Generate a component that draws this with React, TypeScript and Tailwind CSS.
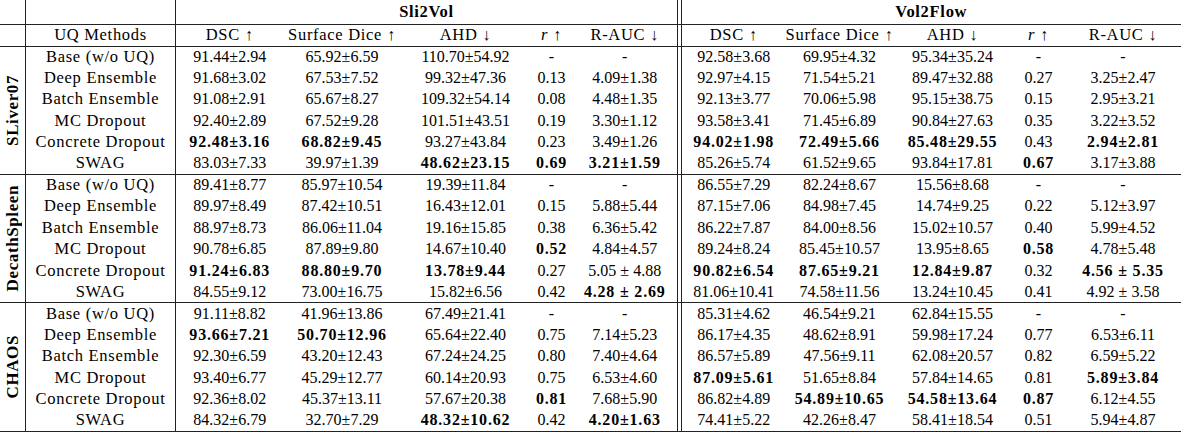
import React from "react";

type Row = [string, ...string[]];

const groups: { name: string; rows: Row[] }[] = [
  {
    name: "SLiver07",
    rows: [
      ["Base (w/o UQ)", "91.44±2.94", "65.92±6.59", "110.70±54.92", "-", "-", "92.58±3.68", "69.95±4.32", "95.34±35.24", "-", "-"],
      ["Deep Ensemble", "91.68±3.02", "67.53±7.52", "99.32±47.36", "0.13", "4.09±1.38", "92.97±4.15", "71.54±5.21", "89.47±32.88", "0.27", "3.25±2.47"],
      ["Batch Ensemble", "91.08±2.91", "65.67±8.27", "109.32±54.14", "0.08", "4.48±1.35", "92.13±3.77", "70.06±5.98", "95.15±38.75", "0.15", "2.95±3.21"],
      ["MC Dropout", "92.40±2.89", "67.52±9.28", "101.51±43.51", "0.19", "3.30±1.12", "93.58±3.41", "71.45±6.89", "90.84±27.63", "0.35", "3.22±3.52"],
      ["Concrete Dropout", "*92.48±3.16", "*68.82±9.45", "93.27±43.84", "0.23", "3.49±1.26", "*94.02±1.98", "*72.49±5.66", "*85.48±29.55", "0.43", "*2.94±2.81"],
      ["SWAG", "83.03±7.33", "39.97±1.39", "*48.62±23.15", "*0.69", "*3.21±1.59", "85.26±5.74", "61.52±9.65", "93.84±17.81", "*0.67", "3.17±3.88"],
    ],
  },
  {
    name: "DecathSpleen",
    rows: [
      ["Base (w/o UQ)", "89.41±8.77", "85.97±10.54", "19.39±11.84", "-", "-", "86.55±7.29", "82.24±8.67", "15.56±8.68", "-", "-"],
      ["Deep Ensemble", "89.97±8.49", "87.42±10.51", "16.43±12.01", "0.15", "5.88±5.44", "87.15±7.06", "84.98±7.45", "14.74±9.25", "0.22", "5.12±3.97"],
      ["Batch Ensemble", "88.97±8.73", "86.06±11.04", "19.16±15.85", "0.38", "6.36±5.42", "86.22±7.87", "84.00±8.56", "15.02±10.57", "0.40", "5.99±4.52"],
      ["MC Dropout", "90.78±6.85", "87.89±9.80", "14.67±10.40", "*0.52", "4.84±4.57", "89.24±8.24", "85.45±10.57", "13.95±8.65", "*0.58", "4.78±5.48"],
      ["Concrete Dropout", "*91.24±6.83", "*88.80±9.70", "*13.78±9.44", "0.27", "5.05 ± 4.88", "*90.82±6.54", "*87.65±9.21", "*12.84±9.87", "0.32", "*4.56 ± 5.35"],
      ["SWAG", "84.55±9.12", "73.00±16.75", "15.82±6.56", "0.42", "*4.28 ± 2.69", "81.06±10.41", "74.58±11.56", "13.24±10.45", "0.41", "4.92 ± 3.58"],
    ],
  },
  {
    name: "CHAOS",
    rows: [
      ["Base (w/o UQ)", "91.11±8.82", "41.96±13.86", "67.49±21.41", "-", "-", "85.31±4.62", "46.54±9.21", "62.84±15.55", "-", "-"],
      ["Deep Ensemble", "*93.66±7.21", "*50.70±12.96", "65.64±22.40", "0.75", "7.14±5.23", "86.17±4.35", "48.62±8.91", "59.98±17.24", "0.77", "6.53±6.11"],
      ["Batch Ensemble", "92.30±6.59", "43.20±12.43", "67.24±24.25", "0.80", "7.40±4.64", "86.57±5.89", "47.56±9.11", "62.08±20.57", "0.82", "6.59±5.22"],
      ["MC Dropout", "93.40±6.77", "45.29±12.77", "60.14±20.93", "0.75", "6.53±4.60", "*87.09±5.61", "51.65±8.84", "57.84±14.65", "0.81", "*5.89±3.84"],
      ["Concrete Dropout", "92.36±8.02", "45.37±13.11", "57.67±20.38", "*0.81", "7.68±5.90", "86.82±4.89", "*54.89±10.65", "*54.58±13.64", "*0.87", "6.12±4.55"],
      ["SWAG", "84.32±6.79", "32.70±7.29", "*48.32±10.62", "0.42", "*4.20±1.63", "74.41±5.22", "42.26±8.47", "58.41±18.54", "0.51", "5.94±4.87"],
    ],
  },
];

const widths = [25, 150, 108, 117, 130, 42, 105, 4, 104, 108, 118, 54, 115];

const line = "border-[#222]";
const td = "p-0 text-center whitespace-nowrap align-middle";
// method names and headers are set a bit wider, like the LaTeX roman face
const label = "text-[16.5px] tracking-[0.7px]";

function Val({ v }: { v: string }) {
  if (v.startsWith("*")) return <span className="font-bold tracking-[0.8px]">{v.slice(1)}</span>;
  return <>{v}</>;
}

function Metrics() {
  return (
    <>
      <td className={`${td} ${label}`}>DSC ↑</td>
      <td className={`${td} ${label}`}>Surface Dice ↑</td>
      <td className={`${td} ${label}`}>AHD ↓</td>
      <td className={`${td} ${label}`}>
        <i>r</i> ↑
      </td>
      <td className={`${td} ${label}`}>R-AUC ↓</td>
    </>
  );
}

export default function App() {
  return (
    <div className="w-[1183px] h-[436px] bg-white text-black overflow-hidden">
      <table
        className="table-fixed border-collapse text-[16px] leading-[20px]"
        style={{ fontFamily: '"Liberation Serif", "DejaVu Serif", serif' }}
      >
        <colgroup>
          {widths.map((w, i) => (
            <col key={i} style={{ width: w }} />
          ))}
        </colgroup>
        <tbody>
          <tr className={`h-[24px] border-b ${line}`}>
            <td className={`${td} border-r ${line}`} />
            <td className={`${td} border-r ${line}`} />
            <td colSpan={5} className={`${td} ${label} font-bold border-r ${line}`}>
              Sli2Vol
            </td>
            <td className={`${td} border-r ${line}`} />
            <td colSpan={5} className={`${td} ${label} font-bold`}>
              Vol2Flow
            </td>
          </tr>
          <tr className={`h-[22px] border-b ${line}`}>
            <td className={`${td} border-r ${line}`} />
            <td className={`${td} ${label} border-r ${line}`}>UQ Methods</td>
            <Metrics />
            <td className={`${td} border-x ${line}`} />
            <Metrics />
          </tr>
          {groups.map((g) =>
            g.rows.map((r, i) => (
              <tr key={g.name + i} className={`h-[21.4px] ${i === 5 ? `border-b ${line}` : ""}`}>
                {i === 0 && (
                  <td rowSpan={6} className={`${td} border-r ${line}`}>
                    <div className="mx-auto font-bold text-[17px] tracking-[0.6px] [writing-mode:vertical-rl] rotate-180 leading-[25px]">
                      {g.name}
                    </div>
                  </td>
                )}
                <td className={`${td} ${label} border-r ${line}`}>{r[0]}</td>
                {r.slice(1, 6).map((v, j) => (
                  <td key={j} className={td}>
                    <Val v={v} />
                  </td>
                ))}
                <td className={`${td} border-x ${line}`} />
                {r.slice(6).map((v, j) => (
                  <td key={j + 6} className={td}>
                    <Val v={v} />
                  </td>
                ))}
              </tr>
            ))
          )}
        </tbody>
      </table>
    </div>
  );
}
